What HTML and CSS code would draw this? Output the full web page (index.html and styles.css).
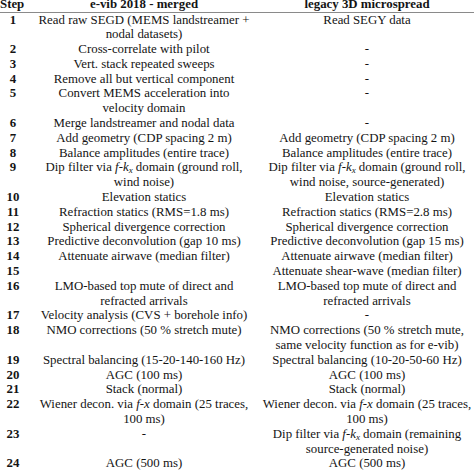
FILE: index.html
```html
<!DOCTYPE html>
<html>
<head>
<meta charset="utf-8">
<link rel="stylesheet" href="styles.css">
</head>
<body>
<table class="steps">
  <colgroup>
    <col class="c-step">
    <col class="c-evib">
    <col class="c-legacy">
  </colgroup>
  <thead>
    <tr><th class="h-step">Step</th><th>e-vib 2018 - merged</th><th class="h-legacy">legacy 3D microspread</th></tr>
  </thead>
  <tbody>
    <tr><td class="n">1</td><td>Read raw SEGD (MEMS landstreamer +<br>nodal datasets)</td><td class="r">Read SEGY data</td></tr>
    <tr><td class="n">2</td><td>Cross-correlate with pilot</td><td class="r">-</td></tr>
    <tr><td class="n">3</td><td>Vert. stack repeated sweeps</td><td class="r">-</td></tr>
    <tr><td class="n">4</td><td>Remove all but vertical component</td><td class="r">-</td></tr>
    <tr><td class="n">5</td><td>Convert MEMS acceleration into<br>velocity domain</td><td class="r">-</td></tr>
    <tr><td class="n">6</td><td>Merge landstreamer and nodal data</td><td class="r">-</td></tr>
    <tr><td class="n">7</td><td>Add geometry (CDP spacing 2 m)</td><td class="r">Add geometry (CDP spacing 2 m)</td></tr>
    <tr><td class="n">8</td><td>Balance amplitudes (entire trace)</td><td class="r">Balance amplitudes (entire trace)</td></tr>
    <tr><td class="n">9</td><td>Dip filter via <i>f</i>-<i>k<sub>x</sub></i> domain (ground roll,<br>wind noise)</td><td class="r">Dip filter via <i>f</i>-<i>k<sub>x</sub></i> domain (ground roll,<br>wind noise, source-generated)</td></tr>
    <tr><td class="n">10</td><td>Elevation statics</td><td class="r">Elevation statics</td></tr>
    <tr><td class="n">11</td><td>Refraction statics (RMS=1.8 ms)</td><td class="r">Refraction statics (RMS=2.8 ms)</td></tr>
    <tr><td class="n">12</td><td>Spherical divergence correction</td><td class="r">Spherical divergence correction</td></tr>
    <tr><td class="n">13</td><td>Predictive deconvolution (gap 10 ms)</td><td class="r">Predictive deconvolution (gap 15 ms)</td></tr>
    <tr><td class="n">14</td><td>Attenuate airwave (median filter)</td><td class="r">Attenuate airwave (median filter)</td></tr>
    <tr><td class="n">15</td><td></td><td class="r">Attenuate shear-wave (median filter)</td></tr>
    <tr><td class="n">16</td><td>LMO-based top mute of direct and<br>refracted arrivals</td><td class="r">LMO-based top mute of direct and<br>refracted arrivals</td></tr>
    <tr><td class="n">17</td><td>Velocity analysis (CVS + borehole info)</td><td class="r">-</td></tr>
    <tr><td class="n">18</td><td>NMO corrections (50 % stretch mute)</td><td class="r">NMO corrections (50 % stretch mute,<br>same velocity function as for e-vib)</td></tr>
    <tr><td class="n">19</td><td>Spectral balancing (15-20-140-160 Hz)</td><td class="r">Spectral balancing (10-20-50-60 Hz)</td></tr>
    <tr><td class="n">20</td><td>AGC (100 ms)</td><td class="r">AGC (100 ms)</td></tr>
    <tr><td class="n">21</td><td>Stack (normal)</td><td class="r">Stack (normal)</td></tr>
    <tr><td class="n">22</td><td>Wiener decon. via <i>f</i>-<i>x</i> domain (25 traces,<br>100 ms)</td><td class="r">Wiener decon. via <i>f</i>-<i>x</i> domain (25 traces,<br>100 ms)</td></tr>
    <tr><td class="n">23</td><td>-</td><td class="r">Dip filter via <i>f</i>-<i>k<sub>x</sub></i> domain (remaining<br>source-generated noise)</td></tr>
    <tr><td class="n">24</td><td>AGC (500 ms)</td><td class="r">AGC (500 ms)</td></tr>
  </tbody>
</table>
</body>
</html>
```

FILE: styles.css
```css
html, body {
  margin: 0;
  padding: 0;
  background: #ffffff;
}

body {
  font-family: "Liberation Serif", "Times New Roman", serif;
  font-size: 12.85px;
  color: #141414;
  overflow: hidden;
}

.steps {
  border-collapse: collapse;
  table-layout: fixed;
  width: 474px;
  margin-top: -3.3px;
  font-family: "Liberation Serif", "Times New Roman", serif;
  font-size: 12.85px;
}

.c-step { width: 26px; }
.c-evib { width: 236px; }
.c-legacy { width: 212px; }

.steps th {
  font-weight: bold;
  text-align: center;
  padding: 0;
  line-height: 14.8px;
  white-space: nowrap;
  border-bottom: 1px solid #8a8a8a;
}

.steps th.h-step {
  text-align: left;
}

.steps th.h-legacy,
.steps td.r {
  padding-right: 2px;
}

.steps td {
  padding: 0;
  text-align: center;
  vertical-align: top;
  line-height: 14.8px;
  white-space: nowrap;
}

.steps td.n {
  font-weight: bold;
}

.steps sub {
  font-size: 0.7em;
  line-height: 0;
  vertical-align: -0.25em;
}
```
